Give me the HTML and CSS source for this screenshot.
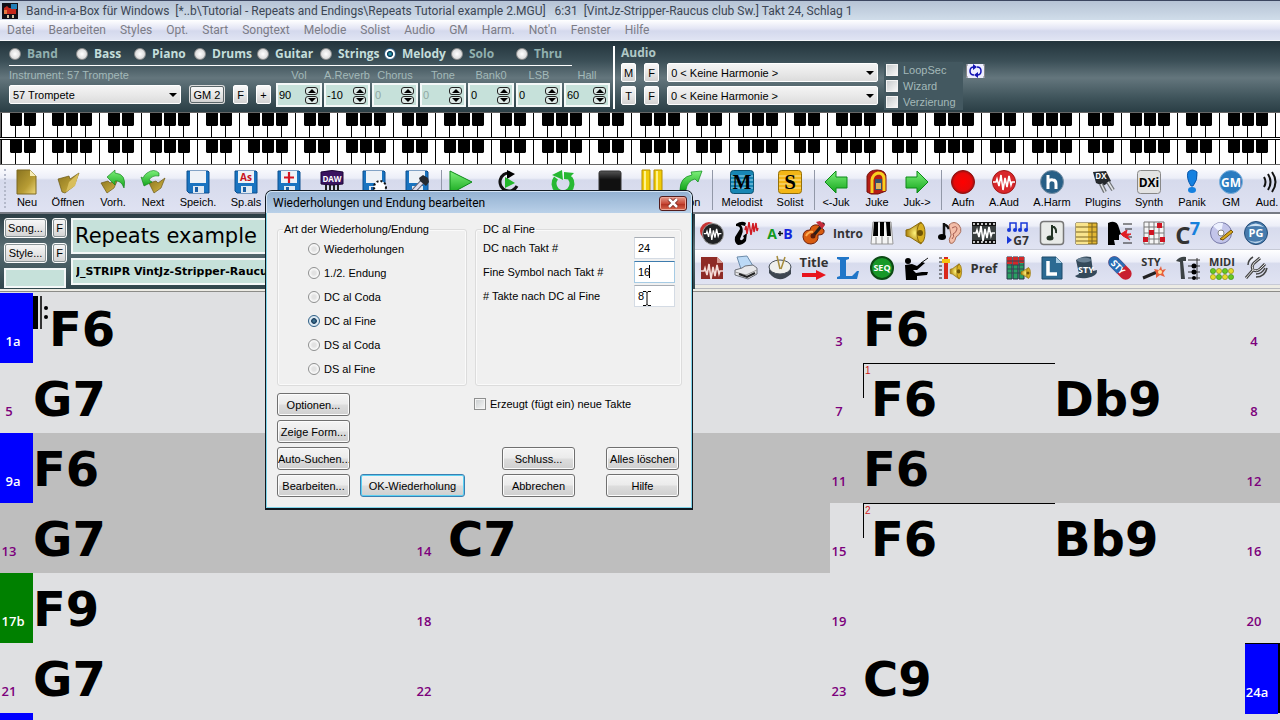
FILE: index.html
```html
<!DOCTYPE html>
<html lang="de">
<head>
<meta charset="utf-8">
<title>Band-in-a-Box für Windows</title>
<link rel="stylesheet" href="styles.css">
</head>
<body>
<svg class="defs" aria-hidden="true">
  <defs>
    <linearGradient id="gold" x1="0" y1="0" x2="1" y2="1"><stop offset="0" stop-color="#8a7420"/><stop offset=".6" stop-color="#b79c34"/><stop offset="1" stop-color="#efd87a"/></linearGradient>
    <linearGradient id="green" x1="0" y1="0" x2="0" y2="1"><stop offset="0" stop-color="#7df07a"/><stop offset="1" stop-color="#14a51c"/></linearGradient>
    <linearGradient id="black" x1="0" y1="0" x2="0" y2="1"><stop offset="0" stop-color="#555"/><stop offset=".4" stop-color="#111"/></linearGradient>
    <radialGradient id="red"><stop offset="0" stop-color="#f00"/><stop offset=".75" stop-color="#e80808"/><stop offset="1" stop-color="#a01010"/></radialGradient>
    <radialGradient id="brass"><stop offset="0" stop-color="#fff27a"/><stop offset="1" stop-color="#a87e08"/></radialGradient>
    <g id="folder"><path d="M2 9l11-3 1 3 9-6-5 13-9 7-3-1z" fill="url(#gold)" stroke="#6b5915" stroke-width=".7"/><path d="M10 22l3-10 10-9-4 13z" fill="#d8be5c"/></g>
    <g id="disk"><path d="M1 1h21l1 1v21H3l-2-2z" fill="#1a74c0" stroke="#0d4f8e"/><path d="M4 1h16v12H4z" fill="#edf2f7"/><path d="M7 16h11v7H7z" fill="#dfe9f2"/><path d="M9 17h3v5H9z" fill="#1a5fa5"/></g>
    <g id="speaker"><path d="M2 9l4-1L17 1q5 11 0 22L6 16l-4-1z" fill="url(#brass)" stroke="#8b6b0c"/><ellipse cx="17" cy="12" rx="4" ry="10" fill="#d7ae20" stroke="#8b6b0c"/><circle cx="16" cy="12" r="3" fill="#6f5405"/></g>
    <path id="wave" d="M1 12h3l1-3 2 7 2-11 2 15 2-12 2 9 2-11 2 9 1-3h3" fill="none" stroke-width="1.6"/>
    <pattern id="octave" width="98" height="24" patternUnits="userSpaceOnUse">
      <path d="M0 0h98v24H0z" fill="#fff"/>
      <path d="M.5 0v24M14.500 12v12M28.500 12v12M42.500 0v24M56.500 12v12M70.500 12v12M84.500 12v12" stroke="#000"/>
      <path d="M9 0h12v12l-1 1H10l-1-1zM23 0h12v12l-1 1H24l-1-1zM51 0h12v12l-1 1H52l-1-1zM65 0h12v12l-1 1H66l-1-1zM79 0h12v12l-1 1H80l-1-1z"/>
    </pattern>
  </defs>
</svg>

<header class="titlebar">
  <svg class="app" viewBox="0 0 16 16"><path d="M0 0h16v16H0z" fill="#101018"/><path d="M2 5l3-2 2 2h7v6H2z" fill="#c4281c"/><path d="M9 1h6v5H9z" fill="#237fb8"/><path d="M2 7h3v4H2z" fill="#e57a3e"/><path d="M5 12h2v3H5zm5 0h2v3h-2z" fill="#cfc4a4"/></svg>
  <span class="title">Band-in-a-Box für Windows&nbsp; [*..b\Tutorial - Repeats and Endings\Repeats Tutorial example 2.MGU]&nbsp;&nbsp; 6:31&nbsp; [VintJz-Stripper-Raucus club Sw.] Takt 24, Schlag 1</span>
</header>
<nav class="menubar">
  <button>Datei</button><button>Bearbeiten</button><button>Styles</button><button>Opt.</button><button>Start</button><button>Songtext</button><button>Melodie</button><button>Solist</button><button>Audio</button><button>GM</button><button>Harm.</button><button>Not'n</button><button>Fenster</button><button>Hilfe</button>
</nav>

<section class="mixer">
  <div class="channels">
    <div class="parts">
      <label class="dim"><input type="radio" name="part">Band</label>
      <label><input type="radio" name="part">Bass</label>
      <label><input type="radio" name="part">Piano</label>
      <label><input type="radio" name="part">Drums</label>
      <label><input type="radio" name="part">Guitar</label>
      <label><input type="radio" name="part">Strings</label>
      <label><input type="radio" name="part" checked>Melody</label>
      <label class="dim"><input type="radio" name="part">Solo</label>
      <label class="dim"><input type="radio" name="part">Thru</label>
    </div>
    <div class="settings">
      <div class="instrument">
        <label for="instr">Instrument: 57 Trompete</label>
        <div class="row">
          <span class="drop wide"><select id="instr"><option>57 Trompete</option></select></span>
          <button class="key gm">GM 2</button><button class="key">F</button><button class="key">+</button>
        </div>
      </div>
      <div class="spin"><label for="vol">Vol</label><div class="box"><input id="vol" value="90"><span class="steps"><button aria-label="Vol +"></button><button aria-label="Vol -"></button></span></div></div>
      <div class="spin"><label for="rev">A.Reverb</label><div class="box"><input id="rev" value="-10"><span class="steps"><button aria-label="Reverb +"></button><button aria-label="Reverb -"></button></span></div></div>
      <div class="spin off"><label for="cho">Chorus</label><div class="box"><input id="cho" value="0"><span class="steps"><button aria-label="Chorus +"></button><button aria-label="Chorus -"></button></span></div></div>
      <div class="spin off"><label for="ton">Tone</label><div class="box"><input id="ton" value="0"><span class="steps"><button aria-label="Tone +"></button><button aria-label="Tone -"></button></span></div></div>
      <div class="spin"><label for="bnk">Bank0</label><div class="box"><input id="bnk" value="0"><span class="steps"><button aria-label="Bank +"></button><button aria-label="Bank -"></button></span></div></div>
      <div class="spin"><label for="lsb">LSB</label><div class="box"><input id="lsb" value="0"><span class="steps"><button aria-label="LSB +"></button><button aria-label="LSB -"></button></span></div></div>
      <div class="spin"><label for="hal">Hall</label><div class="box"><input id="hal" value="60"><span class="steps"><button aria-label="Hall +"></button><button aria-label="Hall -"></button></span></div></div>
    </div>
  </div>
  <div class="audio">
    <div class="harmony">
      <h2>Audio</h2>
      <div class="row"><button class="key">M</button><button class="key">F</button><span class="drop"><select aria-label="Harmonie M"><option>0 &lt; Keine Harmonie &gt;</option></select></span></div>
      <div class="row"><button class="key">T</button><button class="key">F</button><span class="drop"><select aria-label="Harmonie T"><option>0 &lt; Keine Harmonie &gt;</option></select></span></div>
    </div>
    <div class="flags">
      <label><input type="checkbox">LoopSec</label>
      <label><input type="checkbox">Wizard</label>
      <label><input type="checkbox">Verzierung</label>
    </div>
    <button class="loop" aria-label="Loop"><svg viewBox="0 0 19 14"><g fill="none" stroke="#1414b4" stroke-width="1.500"><path d="M8 11Q4 11 4 7q0-4 4-4h1M11 3q4 0 4 4 0 4-4 4h-1"/></g><path d="M7 0l4 3-4 3zM12 8l-4 3 4 3z" fill="#1414b4"/><path d="M2 1H.5v12H2M17 1h1.500v12H17" fill="none" stroke="#888"/></svg></button>
  </div>
</section>

<section class="keyboards" aria-label="Klaviatur">
  <svg><rect width="100%" height="24" fill="url(#octave)"/></svg>
  <svg><rect width="100%" height="24" fill="url(#octave)"/></svg>
</section>

<nav class="toolbar">
  <button><svg viewBox="0 0 24 24"><path d="M2 0h13l6 6v18H2z" fill="url(#gold)" stroke="#7d6820"/><path d="M15 0v6h6z" fill="#f6ecb4"/></svg>Neu</button>
  <button><svg viewBox="0 0 24 24"><use href="#folder"/></svg>Öffnen</button>
  <button><svg viewBox="0 0 24 24"><path d="M0 13l7-2 2 2 8-4-4 9-7 5z" fill="url(#gold)" stroke="#6b5915" stroke-width=".7"/><path d="M6 7l8-7v3q12 1 9 15-3-8-9-7v4z" fill="url(#green)" stroke="#0b7a14" stroke-width=".6"/></svg>Vorh.</button>
  <button><svg viewBox="0 0 24 24"><path d="M8 13l7-2 2 2 7-5-4 10-7 5z" fill="url(#gold)" stroke="#6b5915" stroke-width=".7"/><path d="M18 3Q13-2 6 3q-3 2-4 5L0 7l3 9 8-4-3-2q3-5 10-4z" fill="url(#green)" stroke="#0b7a14" stroke-width=".6"/></svg>Next</button>
  <button><svg viewBox="0 0 24 24"><use href="#disk"/></svg>Speich.</button>
  <button><svg viewBox="0 0 24 24"><use href="#disk"/><text x="12" y="11" font-size="10" fill="#c8141c">As</text></svg>Sp.als</button>
  <button aria-label="Speichern plus"><svg viewBox="0 0 24 24"><use href="#disk"/><path d="M12 2v11M7 7.500h10" stroke="#d41420" stroke-width="2.200"/></svg></button>
  <button aria-label="DAW"><svg viewBox="0 0 24 24"><path d="M1 2q11-3 22 0v12q-11 2-22 0z" fill="#3a1460" stroke="#1d0838"/><path d="M6 15v9M10 15v9M14 15v9M18 15v9" stroke="#222" stroke-width="2"/><text x="12" y="12" font-size="8" fill="#fff">DAW</text></svg></button>
  <button aria-label="MIDI speichern"><svg viewBox="0 0 24 24"><use href="#disk"/><circle cx="18" cy="17" r="6" fill="#fff" stroke="#111" stroke-dasharray="2 2" stroke-width="2"/></svg></button>
  <button aria-label="Audio speichern"><svg viewBox="0 0 24 24"><use href="#disk"/><path d="M6 24L18 11" stroke="#667" stroke-width="5"/><path d="M6 24L18 11" stroke="#dde" stroke-width="3"/><path d="M14 8l4-3 5 3 1 4-3 4-6-5z" fill="#262a30"/></svg></button>
  <i></i>
  <button aria-label="Play"><svg viewBox="0 0 24 24"><path d="M1 1l22 11L1 24z" fill="url(#green)" stroke="#0c8a18"/></svg></button>
  <button aria-label="Wiederholen"><svg viewBox="0 0 24 24"><path d="M14 3A9 9 0 1 0 21 16" fill="none" stroke="#111" stroke-width="3"/><path d="M11 0l8 4-8 5z"/><path d="M9 7l10 6-10 5z" fill="#22b82c"/></svg></button>
  <button aria-label="Schleife"><svg viewBox="0 0 24 24"><path d="M5 8a9 9 0 1 0 14 0" fill="none" stroke="#26b832" stroke-width="5"/><path d="M1 5l10-5 1 10-4-2zM13 9V2l10 1-3 3 2 4z" fill="#26b832"/></svg></button>
  <button aria-label="Stop"><svg viewBox="0 0 24 24"><rect x="1" y="1" width="22" height="22" rx="2" fill="url(#black)" stroke="#333"/></svg></button>
  <button aria-label="Pause"><svg viewBox="0 0 24 24"><path d="M2 0h8v24H2zM14 0h8v24h-8z" fill="#f0cc08" stroke="#b48d00"/><path d="M4 1h2v22H4zM16 1h2v22h-2z" fill="#fff38a"/></svg></button>
  <button><svg viewBox="0 0 24 24"><path d="M1 20Q1 7 13 5l-1-3 11-1-4 11-3-3Q8 11 7 20z" fill="url(#green)" stroke="#0c8a18" stroke-width=".7"/></svg>Von</button>
  <i></i>
  <button><svg viewBox="0 0 24 24"><rect x=".5" y=".5" width="23" height="23" rx="3" fill="#1786b4" stroke="#0c5070"/><path d="M1 6h22M1 10h22M1 14h22M1 18h22" stroke="#9cd8ee"/><text class="serif" x="12" y="19" font-size="20">M</text></svg>Melodist</button>
  <button><svg viewBox="0 0 24 24"><rect x=".5" y=".5" width="23" height="23" rx="3" fill="#f3b616" stroke="#94700a"/><path d="M1 6h22M1 10h22M1 14h22M1 18h22" stroke="#fbe49a"/><text class="serif" x="12" y="19" font-size="21">S</text></svg>Solist</button>
  <i></i>
  <button><svg viewBox="0 0 24 24"><path d="M1 12L12 1v6h11v11H12v5z" fill="url(#green)" stroke="#0c8a18"/></svg>&lt;-Juk</button>
  <button><svg viewBox="0 0 24 24"><path d="M2 22V6Q4 0 12 0q10 0 9 9v12l-8 3H6z" fill="#b41c14" stroke="#701008"/><path d="M7 23V10q1-6 6-7 6 0 6 6v12" fill="none" stroke="#f8d020" stroke-width="3"/><path d="M10 9h7v11h-7z" fill="#36506c"/><path d="M11 13h5v6h-5z" fill="#e0b45c"/></svg>Juke</button>
  <button><svg viewBox="0 0 24 24"><path d="M23 12L12 1v6H1v11h11v5z" fill="url(#green)" stroke="#0c8a18"/></svg>Juk-&gt;</button>
  <i></i>
  <button><svg viewBox="0 0 24 24"><circle cx="12" cy="12" r="11.500" fill="url(#red)" stroke="#8e1010"/></svg>Aufn</button>
  <button><svg viewBox="0 0 24 24"><circle cx="12" cy="12" r="11.500" fill="#d8262a" stroke="#a01818"/><use href="#wave" stroke="#fff"/></svg>A.Aud</button>
  <button><svg viewBox="0 0 24 24"><circle cx="12" cy="12" r="11.500" fill="#285f86" stroke="#7890a4"/><path d="M8 5v14M8 13q1-4 5-3 3 0 3 4v5" fill="none" stroke="#fff" stroke-width="3"/></svg>A.Harm</button>
  <button><svg viewBox="0 0 24 24"><path d="M2 2l13-1 5 10-8 5-7-3z" fill="#24282c"/><path d="M10 14l4 8M17 12l5 8" stroke="#707478" stroke-width="4"/><path d="M10 14l4 8M17 12l5 8" stroke="#e0e2e4" stroke-width="1.500"/><text x="10" y="9" font-size="8" fill="#fff">DX</text></svg>Plugins</button>
  <button><svg viewBox="0 0 24 24"><rect x=".5" y=".5" width="23" height="23" rx="3" fill="#e3e3e3" stroke="#888"/><text x="12" y="17" font-size="12">DXi</text></svg>Synth</button>
  <button><svg viewBox="0 0 24 24"><path d="M8 2q4-4 9 0 1 8-4 14h-2Q6 8 8 2z" fill="#1480e0" stroke="#0a58ac"/><ellipse cx="12" cy="20" rx="4" ry="3" fill="#1480e0"/></svg>Panik</button>
  <button><svg viewBox="0 0 24 24"><circle cx="12" cy="12" r="11.500" fill="#2a7cc0" stroke="#7ab0dc"/><text x="12" y="17" font-size="12" fill="#fff">GM</text></svg>GM</button>
  <button><svg viewBox="0 0 24 24"><path d="M9 7q3 5 0 10M13 4q5 8 0 16M17 2q7 10 0 20" fill="none" stroke="#111" stroke-width="2"/></svg>Aud.</button>
</nav>

<section class="songbar">
  <div class="song">
    <div class="songkeys">
      <button class="key">Song...</button><button class="key">F</button>
      <button class="key">Style...</button><button class="key">F</button>
      <input aria-label="Tonart" class="tone">
    </div>
    <div class="names">
      <input class="name" aria-label="Songtitel" value="Repeats example">
      <input class="style" aria-label="Style" value="J_STRIPR VintJz-Stripper-Raucus club Sw.">
    </div>
  </div>
  <div class="tools">
    <div class="toolrow">
      <button aria-label="Audio"><svg viewBox="0 0 24 24"><circle cx="9" cy="10" r="9" fill="#c83434"/><circle cx="13" cy="13" r="10.500" fill="#202224" stroke="#999"/><g transform="translate(3 3) scale(.8)"><use href="#wave" stroke="#fff"/></g></svg></button>
      <button aria-label="Sax"><svg viewBox="0 0 24 24"><path d="M2 3q6-4 10-1l-1 3-4-1q3 4 1 9l-2 5q1 3 4-1l-1-2 4-3-1 8q-3 4-8 4-4-2-3-8L6 8q0-3-4-3z"/><path d="M11 9l1-4 1 8 2-12 2 13 2-12 1 9 2-9 1 8 1-3" fill="none" stroke="#d01c24" stroke-width="1.500"/></svg></button>
      <button aria-label="A+B"><svg viewBox="0 0 24 24"><text x="4" y="18" font-size="14" fill="#129a20">A</text><text x="20" y="18" font-size="14" fill="#1424dc">B</text><path d="M12 10v5M10 12.500h5" stroke="#111" stroke-width="1.500"/></svg></button>
      <button aria-label="Gitarre"><svg viewBox="0 0 24 24"><path d="M1 16q0-7 7-7 1-6 8-5l6 5q1 5-6 5 1 8-7 9-7 0-8-7z" fill="#d85c10" stroke="#702008"/><path d="M4 15q3-5 7-4" fill="none" stroke="#ffad50" stroke-width="2"/><path d="M11 15l11-13" stroke="#28201c" stroke-width="3"/><path d="M14 1l4-1 5 4-3 4z" fill="#c42a3a"/><circle cx="11" cy="15" r="2.500" fill="#5a1c08"/></svg></button>
      <button aria-label="Intro"><svg viewBox="0 0 24 24"><text x="12" y="17" font-size="12" fill="#333">Intro</text></svg></button>
      <button aria-label="Klavier"><svg viewBox="0 0 24 24"><path d="M3 1h18l2 22H1z" fill="#f5f5f5" stroke="#999"/><path d="M6 16v7M12 14v9M18 16v7" stroke="#888"/><path d="M4 1h4v14H3zM10 1h4v14h-4zM16 1h4l1 14h-4z"/></svg></button>
      <button aria-label="Lautstärke"><svg viewBox="0 0 24 24"><use href="#speaker"/></svg></button>
      <button aria-label="Gehör"><svg viewBox="0 0 24 24"><path d="M6 2v14M6 3q4 2 5 5" stroke="#111" stroke-width="2.500" fill="none"/><ellipse cx="4" cy="16" rx="4" ry="3"/><path d="M11 4q5-5 10 0 5 7-3 12-2 8-6 6-2-3 1-8z" fill="#f3bda8" stroke="#a66b58"/><path d="M14 7q5-3 5 1-1 4-4 5 2 2-1 5" fill="none" stroke="#a65c50"/></svg></button>
      <button aria-label="Audiospur"><svg viewBox="0 0 24 24"><path d="M0 1h24v22H0z" fill="#111"/><path d="M1 3h22M1 21h22" stroke="#fff" stroke-width="1.500" stroke-dasharray="2 2"/><path d="M0 5h24v14H0z" fill="#383e3e"/><use href="#wave" stroke="#fff"/></svg></button>
      <button aria-label="Akkorde aus MIDI"><svg viewBox="0 0 24 24"><path d="M4 9V2h6v7M15 9V2h6v7" fill="none" stroke="#1838d8" stroke-width="1.500"/><circle cx="3" cy="9" r="2" fill="#1838d8"/><circle cx="9" cy="9" r="2" fill="#1838d8"/><circle cx="14" cy="9" r="2" fill="#1838d8"/><circle cx="20" cy="9" r="2" fill="#1838d8"/><path d="M1 15l5 4-5 4z" fill="#1838d8"/><text x="15" y="24" font-size="12" fill="#333">G7</text></svg></button>
      <button aria-label="Noten"><svg viewBox="0 0 24 24"><rect x=".5" y=".5" width="23" height="23" rx="3" fill="#e9ebe8" stroke="#777" stroke-width="1.500"/><path d="M12 4v12M12 5q5 2 4 7" fill="none" stroke="#233424" stroke-width="2"/><ellipse cx="10" cy="17" rx="3.500" ry="2.500" fill="#233424"/></svg></button>
      <button aria-label="Leadsheet"><svg viewBox="0 0 24 24"><path d="M2 2h21v21H2z" fill="#e2b634" stroke="#685414"/><path d="M2 2h12v21H2z" fill="#f9e48c"/><path d="M2 6h21M2 11h21M2 16h21M2 20h21M18 2v21" stroke="#7b6520"/></svg></button>
      <button aria-label="Gesang"><svg viewBox="0 0 24 24"><path d="M0 2q9-4 11 5l2 6-2 1v5H6l1 5H0z"/><path d="M15 3h9M17 8h7M17 16h7M15 22h9" stroke="#222"/><path d="M13 13l6-4-1 4 5 0-4 2 3 4-7-4z" fill="#e01c24" stroke="#e01c24"/></svg></button>
      <button aria-label="Griffbrett"><svg viewBox="0 0 24 24"><path d="M2 1h20v22H2zM2 6h20M2 12h20M2 18h20M7 1v22M12 1v22M17 1v22" fill="#f5f5f5" stroke="#777"/><path d="M15 2h5v5h-5zM7 9h5v5H7zM1 16h5v5H1zM18 16h5v5h-5z" fill="#cf1422"/></svg></button>
      <button aria-label="C7"><svg viewBox="0 0 24 24"><text x="7" y="23" font-size="24" fill="#333">C</text><text x="19" y="14" font-size="18" fill="#1680dc">7</text></svg></button>
      <button aria-label="CD"><svg viewBox="0 0 24 24"><circle cx="11" cy="12" r="10.500" fill="#c3c5ea" stroke="#777aa8"/><path d="M11 12L3 5Q8 0 13 2z" fill="#edf1ff"/><circle cx="11" cy="12" r="3" fill="#fff" stroke="#888"/><path d="M10 18l11-9 2 2-10 8z" fill="#d8a81c" stroke="#765508"/></svg></button>
      <button aria-label="PG"><svg viewBox="0 0 24 24"><circle cx="12" cy="12" r="11.500" fill="#477bad" stroke="#244d78"/><path d="M3 6q9-7 17 0-8-2-17 0z" fill="#cfe2f3"/><path d="M4 19q8 4 16-1-8 8-16 1z" fill="#bcd4ea"/><text x="12" y="16" font-size="11" fill="#fff">PG</text></svg></button>
    </div>
    <div class="toolrow">
      <button aria-label="Audiodatei"><svg viewBox="0 0 24 24"><path d="M1 1h16l6 6v16H1z" fill="#8e2b26"/><path d="M17 1v6h6z" fill="#d89a92"/><g transform="translate(0 3)"><use href="#wave" stroke="#f4dcd8"/></g></svg></button>
      <button aria-label="Drucken"><svg viewBox="0 0 24 24"><path d="M3 1l10-1 6 10-12 3z" fill="#bcdaf6" stroke="#6c8cab"/><path d="M1 14l7-2 3-2 8-1 4 3v6l-9 5L1 19z" fill="#e8e8ea" stroke="#6c7078"/><path d="M1 16l11 3 11-5" fill="none" stroke="#999"/><path d="M5 18l8 3 8-4" fill="none" stroke="#222" stroke-width="2"/></svg></button>
      <button aria-label="Schlagzeug"><svg viewBox="0 0 24 24"><path d="M1 10v7q10 12 22 1v-7z" fill="#3d4650"/><ellipse cx="12" cy="11" rx="11" ry="7" fill="#eff0ed" stroke="#48505a"/><path d="M12 13L9 0M13 13l4-12" stroke="#a68c3c" stroke-width="1.500"/></svg></button>
      <button aria-label="Titel"><svg viewBox="0 0 24 24"><text x="12" y="11" font-size="13" fill="#333">Title</text><path d="M0 17h14v-3l10 5-10 5v-3H0z" fill="#e8141c"/></svg></button>
      <button aria-label="Liedtext"><svg viewBox="0 0 24 24"><path d="M1 1h12v2l-3 1v16h6l5-5h2l-2 8H1v-2l3-1V4L1 3z" fill="#2076c8"/></svg></button>
      <button aria-label="Sequenzer"><svg viewBox="0 0 24 24"><circle cx="12" cy="12" r="11" fill="#189828" stroke="#0c4a14" stroke-width="2"/><text x="12" y="15" font-size="9" fill="#fff">SEQ</text></svg></button>
      <button aria-label="Dirigent"><svg viewBox="0 0 24 24"><circle cx="4" cy="5" r="3"/><path d="M1 9l7-1 5 2 5-4 3 1-8 7H9l3 3 6-1 6 0-1 3-10 1v4H2z"/><path d="M17 7l7-5" stroke="#111"/></svg></button>
      <button aria-label="Mischer"><svg viewBox="0 0 24 24"><path d="M1 2h3M1 6h3M1 10h3M1 14h3M1 18h3M1 22h3" stroke="#222"/><path d="M6 1h4v22H6z" fill="#d9281c"/><path d="M4 3h8v4H4z" fill="#f4c414"/><g transform="translate(11 7) scale(.6 .7)"><use href="#speaker"/></g></svg></button>
      <button aria-label="Einstellungen"><svg viewBox="0 0 24 24"><text x="12" y="17" font-size="13" fill="#333">Pref</text></svg></button>
      <button aria-label="Pegel"><svg viewBox="0 0 24 24"><path d="M1 1h5v22H1zM7 1h5v22H7zM13 1h5v22h-5z" fill="#2a9f64" stroke="#234"/><path d="M1 1h5v7H1zM7 1h5v8H7zM13 1h5v6h-5z" fill="#d42828"/><path d="M1 5h17M1 9h17M1 13h17M1 17h17" stroke="#345"/><g transform="translate(14 11) scale(.5)"><use href="#speaker"/></g></svg></button>
      <button aria-label="Leadsheet-Seite"><svg viewBox="0 0 24 24"><path d="M2 1h14l6 6v16H2z" fill="#2c6a92" stroke="#1c4a6b"/><path d="M16 1v6h6z" fill="#a8cce2"/><path d="M8 5v13h9" fill="none" stroke="#fff" stroke-width="3.500"/></svg></button>
      <button aria-label="Style-Hut"><svg viewBox="0 0 24 24"><path d="M2 4q7-5 15-3l2 14 4-1q1 6-10 8-9 1-12-2l4-2z" fill="#34495a"/><ellipse cx="10" cy="4" rx="7" ry="2.500" fill="#6a8194"/><text x="12" y="17" font-size="9" fill="#fff">STY</text></svg></button>
      <button aria-label="Style-Pille"><svg viewBox="0 0 24 24"><g transform="rotate(45 12 12)"><rect x="-2" y="6" width="28" height="12" rx="6" fill="#c82030"/><path d="M14 6H4a6 6 0 0 0 0 12h10z" fill="#2a6db4"/><text x="10" y="16" font-size="9" fill="#fff">STY</text></g></svg></button>
      <button aria-label="Style-Zauberstab"><svg viewBox="0 0 24 24"><text x="9" y="10" font-size="11" fill="#333">STY</text><path d="M1 22l14-6" stroke="#222" stroke-width="3"/><path d="M12 13l5 1 2-4 1 4 4-1-3 4 2 4-5-2-4 3v-5z" fill="#e8603c"/><circle cx="18" cy="16" r="2" fill="#ffe3a0"/></svg></button>
      <button aria-label="Hammer"><svg viewBox="0 0 24 24"><path d="M0 5q4-5 10-4v4H7l2 18H5L4 6z" fill="#3c4244"/><path d="M12 4h12M12 10h12M12 16h12M12 22h12M21 2v22" stroke="#333"/><circle cx="18" cy="10" r="2.500"/><circle cx="18" cy="16" r="2.500"/><circle cx="18" cy="22" r="2"/></svg></button>
      <button aria-label="MIDI"><svg viewBox="0 0 24 24"><text x="12" y="10" font-size="11" fill="#333">MIDI</text><g fill="#68c820" stroke="#388810" stroke-width=".6"><circle cx="3" cy="15" r="2.600"/><circle cx="15" cy="15" r="2.600"/><circle cx="9" cy="21" r="2.600"/><circle cx="21" cy="21" r="2.600"/></g><g fill="#e8dc28" stroke="#888010" stroke-width=".6"><circle cx="9" cy="15" r="2.600"/><circle cx="21" cy="15" r="2.600"/><circle cx="3" cy="21" r="2.600"/><circle cx="15" cy="21" r="2.600"/></g></svg></button>
      <button aria-label="Stimmgabel"><svg viewBox="0 0 24 24"><path d="M2 22l7-8q-2-4 1-7l6-5M9 14q4 2 7-1l5-5" fill="none" stroke="#444" stroke-width="3"/><path d="M2 22l7-8q-2-4 1-7l6-5M9 14q4 2 7-1l5-5" fill="none" stroke="#ddd"/><path d="M4 9q0-5 5-8M12 21q9 0 11-9M12 18q6 0 9-6" fill="none" stroke="#444" stroke-width="1.500"/></svg></button>
    </div>
  </div>
</section>

<main class="sheet">
  <div class="bar a"><b>1a</b><i class="mark"></i><span class="first">F6</span></div><div class="bar"></div><div class="bar"><b>3</b><span>F6</span></div><div class="bar"><b>4</b></div>
  <div class="bar"><b>5</b><span>G7</span></div><div class="bar"></div><div class="bar end"><b>7</b><small>1</small><span>F6</span><span>Db9</span></div><div class="bar"><b>8</b></div>
  <div class="bar a sel"><b>9a</b><span>F6</span></div><div class="bar sel"></div><div class="bar sel"><b>11</b><span>F6</span></div><div class="bar sel"><b>12</b></div>
  <div class="bar sel"><b>13</b><span>G7</span></div><div class="bar sel"><b>14</b><span>C7</span></div><div class="bar end"><b>15</b><small>2</small><span>F6</span><span>Bb9</span></div><div class="bar"><b>16</b></div>
  <div class="bar b"><b>17b</b><span>F9</span></div><div class="bar"><b>18</b></div><div class="bar"><b>19</b></div><div class="bar"><b>20</b></div>
  <div class="bar"><b>21</b><span>G7</span></div><div class="bar"><b>22</b></div><div class="bar"><b>23</b><span>C9</span></div><div class="bar a cur"><b>24a</b></div>
  <div class="bar a"><b></b></div>
</main>

<form class="dialog" onsubmit="return false">
  <div class="caption"><span>Wiederholungen und Endung bearbeiten</span><button type="button" aria-label="Schließen"><svg viewBox="0 0 12 10"><path d="M2 1l8 8M10 1L2 9" stroke="#6c2018" stroke-width="4"/><path d="M2 1l8 8M10 1L2 9" stroke="#fff" stroke-width="2.500"/></svg></button></div>
  <div class="body">
    <div class="groups">
      <fieldset class="kinds">
        <legend>Art der Wiederholung/Endung</legend>
        <label><input type="radio" name="kind">Wiederholungen</label>
        <label><input type="radio" name="kind">1./2. Endung</label>
        <label><input type="radio" name="kind">DC al Coda</label>
        <label><input type="radio" name="kind" checked>DC al Fine</label>
        <label><input type="radio" name="kind">DS al Coda</label>
        <label><input type="radio" name="kind">DS al Fine</label>
      </fieldset>
      <fieldset class="values">
        <legend>DC al Fine</legend>
        <label>DC nach Takt #<input value="24"></label>
        <label class="active">Fine Symbol nach Takt #<input value="16"></label>
        <label># Takte nach DC al Fine<input value="8"></label>
      </fieldset>
    </div>
    <div class="actions">
      <button type="button">Optionen...</button>
      <label class="create"><input type="checkbox">Erzeugt (fügt ein) neue Takte</label>
      <button type="button" class="c1">Zeige Form...</button>
      <button type="button" class="c1">Auto-Suchen...</button>
      <button type="button" class="c4">Schluss...</button>
      <button type="button" class="c5">Alles löschen</button>
      <button type="button" class="c1">Bearbeiten...</button>
      <button type="submit" class="ok">OK-Wiederholung</button>
      <button type="button" class="c4">Abbrechen</button>
      <button type="button" class="c5">Hilfe</button>
    </div>
  </div>
  <svg class="pointer" viewBox="0 0 8 15"><path d="M0 .5h3l1 1 1-1h3M4 1v13M0 14.500h3l1-1 1 1h3" fill="none" stroke="#000"/></svg>
</form>
</body>
</html>
```
FILE: styles.css
```css
* { box-sizing: border-box; }
html, body { height: 100%; }
body {
  margin: 0;
  display: flex;
  flex-direction: column;
  overflow: hidden;
  position: relative;
  background: #dfe0e2;
  font: 11px/14px "Liberation Sans", sans-serif;
  color: #000;
}
button, input, select { font: inherit; color: inherit; margin: 0; padding: 0; border: 0; background: none; }
button { white-space: nowrap; }
svg { display: block; }
.defs { position: absolute; width: 0; height: 0; }

.titlebar {
  flex: none;
  display: flex;
  align-items: center;
  gap: 8px;
  height: 20px;
  padding-left: 2px;
  border-top: 1px solid #3c4660;
  background: linear-gradient(#b6c3d5, #d0ddea);
  font: 12px/18px Roboto, sans-serif;
  color: #3c4654;
  white-space: nowrap;
}
.app { width: 16px; height: 16px; }
.menubar {
  flex: none;
  display: flex;
  gap: 14px;
  height: 21px;
  padding: 0 7px;
  background: linear-gradient(#fff, #e2e4f4 45%, #d4d9ed 55%, #e0e4f3);
  border-bottom: 1px solid #f4f6fa;
  font: 12px/20px Roboto, sans-serif;
  color: #7c7c86;
}

.mixer {
  flex: none;
  display: flex;
  height: 71px;
  background: linear-gradient(#22333b, #3b4f57 28%, #64767d 52%, #3f545b 80%, #2a3e45);
  color: #a3b9b9;
}
.channels { width: 615px; padding: 5px 4px 0 9px; position: relative; }
.channels::after { content: ""; position: absolute; right: 0; top: 5px; bottom: 3px; width: 2px; background: #fff; }
.parts {
  display: grid;
  grid-template-columns: 67px 58px 60px 63px 63px 64px 67px 65px 50px;
  width: 563px;
  height: 20px;
  border-bottom: 1px solid #fff;
  font: bold 12px/14px "Open Sans", sans-serif;
  color: #c4dedb;
}
.parts label { display: flex; align-items: center; gap: 6px; height: 15px; }
.parts .dim { color: #91b0af; }
input[type="radio"] {
  appearance: none;
  flex: none;
  width: 12px;
  height: 12px;
  border: 1px solid #8e8f8f;
  border-radius: 50%;
  background: radial-gradient(#e2e2e2 25%, #f8f8f8 60%);
}
input[type="radio"]:checked {
  border-color: #2e5f86;
  background: radial-gradient(#4d87a4, #16395a 35%, #dce9f2 45%);
}
.parts input[type="radio"] { background: radial-gradient(#fff, #ccc); }
.parts input[type="radio"]:checked { background: radial-gradient(#35c0d0, #0a3350 38%, #fff 48%); }
.settings { display: flex; gap: 2px; }
.settings label { height: 17px; padding-top: 2px; white-space: nowrap; }
.instrument { display: flex; flex-direction: column; width: 265px; }
.row { display: flex; align-items: center; gap: 8px; height: 23px; }
.row .key { height: 19px; }
.key {
  min-width: 15px;
  padding: 0 2px;
  border: 1px solid #fff;
  border-radius: 2px;
  background: linear-gradient(#f8f8f8, #e7e7e7 50%, #d2d2d2);
  color: #000;
}
.key.gm { width: 36px; border: 2px solid #ddd; border-radius: 3px; outline: 1px solid #5b6669; outline-offset: -2px; }
.wide { width: 172px; flex: none; }
.drop { position: relative; height: 19px; }
.drop::after {
  content: "";
  position: absolute;
  right: 4px;
  top: 8px;
  border: 4px solid transparent;
  border-top-color: #000;
  border-bottom: 0;
}
.drop select {
  appearance: none;
  display: block;
  width: 100%;
  height: 19px;
  padding: 0 3px;
  border: 1px solid #fff;
  border-radius: 2px;
  background: linear-gradient(#f4f4f4, #e9e9e9 50%, #dcdcdc);
  color: #000;
}
.spin { display: flex; flex-direction: column; align-items: center; width: 46px; }
.box {
  display: flex;
  align-items: center;
  width: 46px;
  height: 24px;
  padding: 0 1px;
  border: 2px solid #f4f8f8;
  background: #c6e1da;
  color: #000;
}
.box input { width: 26px; min-width: 0; height: 17px; }
.off .box input { color: #92a8a4; }
.steps { display: flex; flex-direction: column; gap: 1px; }
.steps button { width: 13px; height: 8px; display: grid; place-items: center; border: 1px solid #222; border-radius: 3px; background: #dce9e6; }
.steps button::after { content: ""; border: 4px solid transparent; border-bottom-color: #000; border-top: 0; }
.steps button + button::after { border: 4px solid transparent; border-top-color: #000; border-bottom: 0; }
.audio { flex: 1; display: flex; gap: 6px; padding: 5px 6px 0; }
.harmony { width: 257px; }
.harmony h2 { margin: 0; height: 15px; font: bold 12px/14px "Open Sans", sans-serif; color: #b0c8c6; }
.harmony .drop { flex: 1; }
.flags { display: flex; flex-direction: column; gap: 2px; align-self: flex-start; width: 79px; margin-top: 16px; padding: 1px 2px; background: #435860; }
.flags label { display: flex; align-items: center; gap: 5px; height: 14px; }
input[type="checkbox"] { appearance: none; flex: none; width: 12px; height: 12px; border: 1px solid #8e8f8f; background: linear-gradient(135deg, #c8ccce, #f7f7f7); outline: 1px solid #f4f4f4; outline-offset: -2px; }
.flags input[type="checkbox"] { outline-offset: -1px; }
.loop { width: 19px; height: 14px; margin: 18px 0 0 -3px; background: #eef; border-radius: 2px; }

.keyboards { flex: none; display: flex; flex-direction: column; gap: 3px; height: 53px; padding: 1px 0 1px 1px; background: linear-gradient(#666 0 25px, #000 25px 26px, #fff 26px 27px, #000 27px 28px, #666 28px); }
.keyboards svg { width: 100%; height: 24px; }

.toolbar {
  flex: none;
  display: grid;
  grid-template-columns: 38px 44px 46px 34px 56px 40px 46px 40px 44px 42px 6px 34px 60px 50px 44px 40px 38px 4px 56px 40px 8px 36px 46px 34px 14px 30px 52px 44px 58px 34px 52px 26px 46px;
  height: 48px;
  padding: 5px 0 0 8px;
  border-bottom: 1px solid #777b84;
  background: linear-gradient(#fff, #eceef8 28%, #d6daec 32%, #dfe2f2);
  position: relative;
}
.toolbar::before { content: ""; position: absolute; left: 4px; top: 4px; bottom: 4px; border-left: 2px dotted #b4b9ca; }
.toolbar button { display: flex; flex-direction: column; align-items: center; justify-self: center; gap: 1px; line-height: 15px; }
.toolbar button svg, .toolrow svg { width: 24px; height: 24px; overflow: visible; }
.toolbar i { justify-self: center; width: 1px; height: 40px; background: #9298a8; }
svg text { font-family: "Open Sans", sans-serif; font-weight: 700; text-anchor: middle; }
svg .serif { font-family: "Liberation Serif", serif; }

.songbar { flex: none; display: flex; height: 79px; border-bottom: 3px solid #ecebe4; border-top: 1px solid #777b84; }
.song { display: flex; gap: 5px; width: 695px; padding: 4px 2px 4px 4px; background: linear-gradient(#2c3e45, #596d73 45%, #30464c); }
.songkeys { display: grid; grid-template-columns: 43px 14px; grid-template-rows: 20px 20px 20px; gap: 5px; width: 62px; }
.songkeys .key { border-radius: 3px; outline: 1px solid #8a9496; outline-offset: -2px; }
.songkeys .tone { grid-column: 1 / 3; }
.tone, .name, .style { border: 2px solid #f4f8f8; background: #c6e1da; }
.names { flex: 1; display: flex; flex-direction: column; gap: 4px; }
.name { height: 37px; padding-left: 2px; font: 21px/30px "DejaVu Sans", sans-serif; }
.style { height: 27px; padding-left: 3px; font: bold 11px/20px "DejaVu Sans", sans-serif; }
.tools { flex: 1; overflow: hidden; border-bottom: 1px solid #b8bac0; background: #ecebe4; }
.toolrow { display: grid; grid-template-columns: repeat(17, 34px); place-items: center; height: 36px; padding-top: 3px; border-bottom: 1px solid #c7cad6; background: linear-gradient(#fff, #eceef8 34%, #d7dbed 40%, #e0e3f2); }
.toolrow + .toolrow { height: 35px; padding-top: 1px; }

.sheet { flex: 1; display: grid; grid-template-columns: 415fr 415fr 415fr 35fr; grid-auto-rows: 70px; padding-top: 1px; border-top: 1px solid #8c8c88; margin-top: -1px; overflow: hidden; }
.bar { position: relative; display: grid; grid-template-columns: 33px 1fr 1fr; grid-template-rows: 70px; min-width: 0; }
.bar b { display: flex; align-items: flex-end; justify-content: center; width: 18px; padding-bottom: 13px; font: 600 13px/18px "Open Sans", sans-serif; color: #7c007c; }
.bar span { font: bold 48px/72px "DejaVu Sans", sans-serif; white-space: nowrap; }
.sel { background: #bebebe; }
.a b, .b b { width: 33px; padding-right: 7px; color: #fff; }
.a b { background: #00f; }
.b b { background: #008000; }
.mark { position: absolute; left: 33px; top: 3px; width: 9px; height: 33px; border-left: 5px solid #000; border-right: 2px solid #333; }
.mark::after { content: ""; position: absolute; left: 6px; top: 10px; width: 4px; height: 4px; border-radius: 50%; background: #000; box-shadow: 0 9px #000; }
.bar .first { padding-left: 16px; }
.end span { padding-left: 8px; }
.end span + span { padding-left: 0; }
.end small { position: absolute; left: 33px; top: 0; width: 192px; height: 35px; padding-left: 2px; border-top: 1px solid #000; background: linear-gradient(#000, #000) 0 0 / 1px 100% no-repeat; color: #d01818; font-size: 10px; line-height: 13px; }
.cur { border-top: 1px solid #000; box-shadow: inset -2px 0 #000; }
.cur b { padding-right: 9px; }

.dialog {
  position: absolute;
  left: 265px;
  top: 190px;
  width: 428px;
  height: 320px;
  display: flex;
  flex-direction: column;
  border: 1px solid #10181f;
  border-bottom-width: 2px;
  border-radius: 7px 7px 0 0;
  background: #f0f0f0;
  box-shadow: inset 0 0 0 1px #7fd4ea;
}
.caption { display: flex; justify-content: space-between; align-items: center; height: 23px; padding: 1px 4px 0 6px; border: 1px solid #d5e4f4; border-bottom: 0; border-radius: 6px 6px 0 0; background: linear-gradient(#94b2d2, #b9d0e8); font: 12px/20px Roboto, sans-serif; }
.caption button { display: grid; place-items: center; width: 28px; height: 15px; border: 1px solid #521c1c; border-radius: 3px; background: linear-gradient(#e39a8a, #c84a38 50%, #b02e1e 52%, #d86a50); box-shadow: inset 0 0 0 1px #eda899; }
.caption svg { width: 12px; height: 10px; }
.body { padding: 8px 10px 11px 11px; }
.groups { display: flex; gap: 8px; height: 165px; }
fieldset { min-width: 0; margin: 0; padding: 0; border: 1px solid #dcdcdc; border-radius: 3px; box-shadow: inset 0 0 0 1px #fafafa; }
legend { padding: 0 1px; line-height: 16px; }
.kinds { width: 190px; padding-left: 30px; }
.kinds legend { margin-left: -25px; }
.kinds label { display: flex; align-items: center; gap: 4px; height: 24px; }
.values { flex: 1; padding-left: 7px; }
.values legend { margin-left: -1px; }
.values label { position: relative; display: flex; justify-content: space-between; height: 24px; padding: 4px 6px 0 0; }
.values label input { width: 41px; height: 22px; margin-top: -4px; padding-left: 3px; border: 1px solid #d4dbe4; border-top-color: #a8adb4; background: #fff; }
.values .active input { border-color: #a6cbe4; border-top-color: #3d7bad; }
.active::after { content: ""; position: absolute; right: 31px; top: 4px; width: 1px; height: 13px; background: #000; }
.actions { display: grid; grid-template-columns: 83px 114px 28px 104px 73px; grid-auto-rows: 23px; row-gap: 4px; margin-top: 7px; }
.actions button { width: 73px; height: 23px; overflow: hidden; border: 1px solid #707070; border-radius: 3px; background: linear-gradient(#f4f4f4, #ebebeb 48%, #dddddd 52%, #cfcfcf); box-shadow: inset 0 0 0 1px #fcfcfc; }
.create { grid-column: 3 / 6; display: flex; align-items: center; gap: 4px; padding-bottom: 2px; }
.c1 { grid-column: 1; }
.c4 { grid-column: 4; }
.c5 { grid-column: 5; }
.actions .ok { grid-column: 2; width: 105px; border-color: #3c7fb1; box-shadow: inset 0 0 0 1px #5cd0f2; }
.pointer { position: absolute; left: 377px; top: 100px; width: 8px; height: 15px; }
```
